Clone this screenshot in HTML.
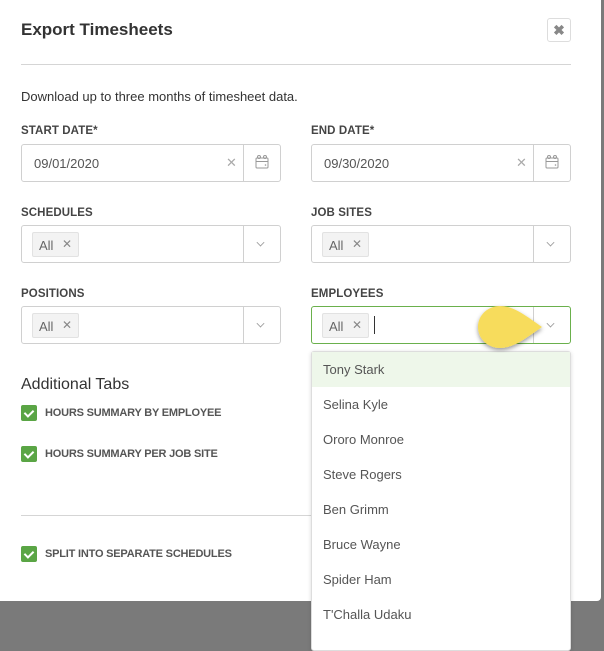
<!DOCTYPE html>
<html><head><meta charset="utf-8"><style>
*{box-sizing:border-box;margin:0;padding:0}
body{width:604px;height:644px;background:#7a7a7a;position:relative;overflow:hidden;font-family:"Liberation Sans",sans-serif;color:#333}
.modal{position:absolute;left:0;top:0;width:601px;height:601px;background:#fff;border-radius:0 0 4px 0}
.a{position:absolute}
.lbl{font-size:11.5px;font-weight:bold;color:#444;letter-spacing:0.1px}
.inp{position:absolute;height:38px;border:1px solid #d0d0d0;border-radius:3px;background:#fff}
.seg{position:absolute;top:0;bottom:0;border-left:1px solid #d0d0d0;width:37px;right:0}
.val{position:absolute;left:12px;top:11px;font-size:13px;color:#555}
.x{position:absolute;font-size:13px;color:#aaa}
.tag{position:absolute;left:10px;top:6px;width:47px;height:25px;background:#f3f3f3;border:1px solid #e2e2e2;border-radius:2px;font-size:13px;color:#666;padding:5px 0 0 6px}
.tag span{position:absolute;left:29px;top:4px;color:#888;font-size:12px}
.chev{position:absolute;left:13px;top:13px;width:7px;height:7px;border-right:1px solid #999;border-bottom:1px solid #999;transform:rotate(45deg) scale(.8)}
.cb{position:absolute;width:16px;height:16px;background:#5aa545;border-radius:2px}
.cb:after{content:"";position:absolute;left:5px;top:3px;width:4px;height:7px;border-right:2px solid #fff;border-bottom:2px solid #fff;transform:rotate(45deg)}
.cbl{position:absolute;font-size:11px;font-weight:bold;color:#555;letter-spacing:-0.2px}
.dd{position:absolute;left:311px;top:351px;width:260px;height:300px;background:#fff;border:1px solid #ddd;border-radius:3px;box-shadow:0 1px 4px rgba(0,0,0,.15)}
.it{height:35px;font-size:13px;color:#555;padding:10px 0 0 11px}
</style></head><body>
<div class="modal">
<div class="a" style="left:21px;top:20px;font-size:17px;font-weight:bold;color:#333">Export Timesheets</div>
<div class="a" style="left:547px;top:18px;width:24px;height:24px;border:1px solid #ddd;border-radius:3px;text-align:center;font-size:14px;line-height:22px;color:#888;font-weight:bold">✖</div>
<div class="a" style="left:21px;top:64px;width:550px;height:1px;background:#d5d5d5"></div>
<div class="a" style="left:21px;top:89px;font-size:13px;color:#333">Download up to three months of timesheet data.</div>
<div class="a lbl" style="left:21px;top:125px">START DATE*</div>
<div class="a lbl" style="left:311px;top:125px">END DATE*</div>
<div class="inp" style="left:21px;top:144px;width:260px"><div class="val">09/01/2020</div><div class="x" style="left:204px;top:10px">✕</div><div class="seg"><svg width="36" height="36" viewBox="0 0 36 36"><rect x="12" y="13" width="12" height="10" rx="1" fill="none" stroke="#999"/><line x1="12" y1="16.5" x2="24" y2="16.5" stroke="#999"/><circle cx="15" cy="12" r="1.5" fill="none" stroke="#999"/><circle cx="21" cy="12" r="1.5" fill="none" stroke="#999"/><circle cx="21.5" cy="20" r=".8" fill="#999"/></svg></div></div>
<div class="inp" style="left:311px;top:144px;width:260px"><div class="val">09/30/2020</div><div class="x" style="left:204px;top:10px">✕</div><div class="seg"><svg width="36" height="36" viewBox="0 0 36 36"><rect x="12" y="13" width="12" height="10" rx="1" fill="none" stroke="#999"/><line x1="12" y1="16.5" x2="24" y2="16.5" stroke="#999"/><circle cx="15" cy="12" r="1.5" fill="none" stroke="#999"/><circle cx="21" cy="12" r="1.5" fill="none" stroke="#999"/><circle cx="21.5" cy="20" r=".8" fill="#999"/></svg></div></div>
<div class="a lbl" style="left:21px;top:207px">SCHEDULES</div>
<div class="a lbl" style="left:311px;top:207px">JOB SITES</div>
<div class="inp" style="left:21px;top:225px;width:260px"><div class="tag">All<span>✕</span></div><div class="seg"><div class="chev"></div></div></div>
<div class="inp" style="left:311px;top:225px;width:260px"><div class="tag">All<span>✕</span></div><div class="seg"><div class="chev"></div></div></div>
<div class="a lbl" style="left:21px;top:288px">POSITIONS</div>
<div class="a lbl" style="left:311px;top:288px">EMPLOYEES</div>
<div class="inp" style="left:21px;top:306px;width:260px"><div class="tag">All<span>✕</span></div><div class="seg"><div class="chev"></div></div></div>
<div class="inp" style="left:311px;top:306px;width:260px;border-color:#6ab04c"><div class="tag">All<span>✕</span></div><div class="a" style="left:62px;top:9px;width:1px;height:18px;background:#333"></div><div class="seg"><div class="chev"></div></div></div>
<div class="a" style="left:21px;top:376px;font-size:16px;color:#333">Additional Tabs</div>
<div class="cb" style="left:21px;top:405px"></div><div class="cbl" style="left:45px;top:407px">HOURS SUMMARY BY EMPLOYEE</div>
<div class="cb" style="left:21px;top:446px"></div><div class="cbl" style="left:45px;top:448px">HOURS SUMMARY PER JOB SITE</div>
<div class="a" style="left:21px;top:515px;width:300px;height:1px;background:#d5d5d5"></div>
<div class="cb" style="left:21px;top:546px"></div><div class="cbl" style="left:45px;top:548px">SPLIT INTO SEPARATE SCHEDULES</div>
</div>
<div class="dd">
<div class="it" style="background:#eef7ea">Tony Stark</div>
<div class="it">Selina Kyle</div>
<div class="it">Ororo Monroe</div>
<div class="it">Steve Rogers</div>
<div class="it">Ben Grimm</div>
<div class="it">Bruce Wayne</div>
<div class="it">Spider Ham</div>
<div class="it">T'Challa Udaku</div>
</div>
<svg class="a" style="left:470px;top:300px" width="80" height="56" viewBox="0 0 80 56"><defs><filter id="s"><feDropShadow dx="0" dy="2" stdDeviation="2" flood-color="#000" flood-opacity=".4"/></filter></defs><path d="M30 6 C18 6 8 15 8 27 C8 39 18 48 30 48 C44 48 56 38 72 27 C56 16 44 6 30 6 Z" fill="#f7dc5c" filter="url(#s)"/></svg>
</body></html>
